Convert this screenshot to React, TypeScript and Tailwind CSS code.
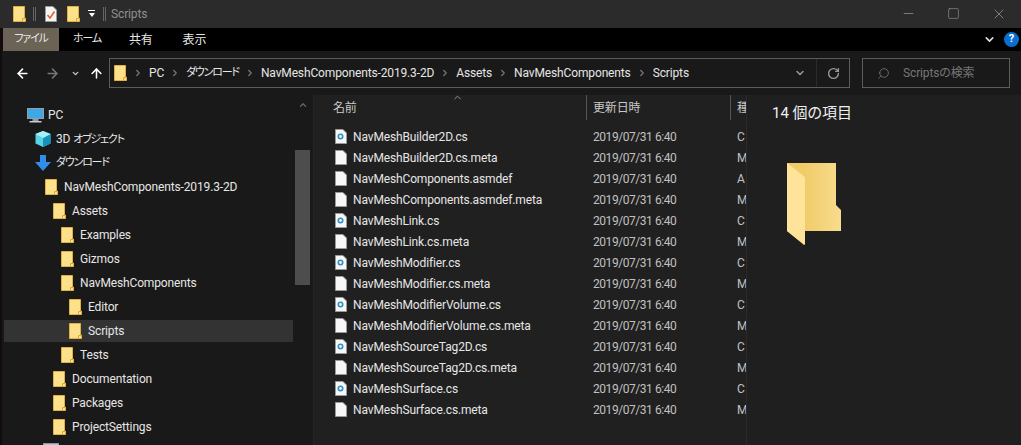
import { ArrowLeft, ArrowRight, ArrowUp, ChevronDown, ChevronRight, ChevronUp, Minus, RotateCw, Search, Square, X } from 'lucide-react';

const files = [
  ['NavMeshBuilder2D.cs', 'C', true],
  ['NavMeshBuilder2D.cs.meta', 'M', false],
  ['NavMeshComponents.asmdef', 'A', false],
  ['NavMeshComponents.asmdef.meta', 'M', false],
  ['NavMeshLink.cs', 'C', true],
  ['NavMeshLink.cs.meta', 'M', false],
  ['NavMeshModifier.cs', 'C', true],
  ['NavMeshModifier.cs.meta', 'M', false],
  ['NavMeshModifierVolume.cs', 'C', true],
  ['NavMeshModifierVolume.cs.meta', 'M', false],
  ['NavMeshSourceTag2D.cs', 'C', true],
  ['NavMeshSourceTag2D.cs.meta', 'M', false],
  ['NavMeshSurface.cs', 'C', true],
  ['NavMeshSurface.cs.meta', 'M', false],
] as const;

const tree = [
  { name: 'NavMeshComponents-2019.3-2D', pad: 'pl-[41px]' },
  { name: 'Assets', pad: 'pl-[49px]' },
  { name: 'Examples', pad: 'pl-[57px]' },
  { name: 'Gizmos', pad: 'pl-[57px]' },
  { name: 'NavMeshComponents', pad: 'pl-[57px]' },
  { name: 'Editor', pad: 'pl-[65px]' },
  { name: 'Scripts', pad: 'pl-[65px]', selected: true },
  { name: 'Tests', pad: 'pl-[57px]' },
  { name: 'Documentation', pad: 'pl-[49px]' },
  { name: 'Packages', pad: 'pl-[49px]' },
  { name: 'ProjectSettings', pad: 'pl-[49px]' },
];

// Yu Gothic's katakana run narrower than Noto's
const kana = 'whitespace-nowrap text-[11px] tracking-[-1.2px]';

function Folder() {
  return (
    <svg width="13" height="16" viewBox="0 0 13 16" className="shrink-0">
      <path d="M0.5 0.5H11.5V12H12.5V15.5H0.5Z" fill="#fde08a" stroke="#e0b040" />
      <path d="M9.5 15V12.5H12" fill="none" stroke="#d8a838" />
    </svg>
  );
}

function FileIcon({ cs }: { cs: boolean }) {
  return (
    <svg width="12" height="15" viewBox="0 0 12 15" className="shrink-0">
      <path d="M0.5 0.5H8L11.5 4V14.5H0.5Z" fill="#f7f7f7" stroke="#9a9a9a" />
      {cs && <circle cx="5.5" cy="7.5" r="2.2" fill="none" stroke="#2f8fc8" strokeWidth="1.6" />}
    </svg>
  );
}

function Crumb({ children, jp }: { children: string; jp?: boolean }) {
  return (
    <>
      <ChevronRight size={10} strokeWidth={3} className="mx-[6px] shrink-0 text-[#777]" />
      <span className={jp ? kana : 'whitespace-nowrap'}>{children}</span>
    </>
  );
}

export default function App() {
  return (
    <div
      className="flex h-[445px] w-[1021px] flex-col overflow-hidden bg-[#191919] text-[12px] tracking-[-0.14px] text-[#e6e6e6] [font-feature-settings:'palt']"
      style={{ fontFamily: 'Roboto, "Noto Sans CJK JP", sans-serif' }}
    >
      {/* title bar */}
      <div className="flex h-[28px] shrink-0 items-center bg-[#2b2b2b] pb-px pl-[13px]">
        <Folder />
        <div className="ml-[7px] h-[14px] w-[3px] border-x border-[#666]" />
        <svg width="12" height="16" viewBox="0 0 12 16" className="ml-[9px]">
          <path d="M0.5 0.5H8L11.5 4V15.5H0.5Z" fill="#f5f5f5" stroke="#999" />
          <path d="M2.5 9L5 12L9.5 5.5" fill="none" stroke="#e0602a" strokeWidth="1.5" />
        </svg>
        <div className="ml-[10px]">
          <Folder />
        </div>
        <div className="ml-[8px] flex flex-col items-center gap-[2px]">
          <div className="h-px w-[7px] bg-white" />
          <div className="h-0 w-0 border-x-[3.5px] border-t-[4px] border-x-transparent border-t-white" />
        </div>
        <div className="ml-[8px] h-[14px] w-[3px] border-x border-[#666]" />
        <span className="ml-[5px] text-[#8f8f8f]">Scripts</span>
        <div className="ml-auto flex items-center pr-[14px]">
          <Minus size={15} strokeWidth={1} className="text-[#aaa]" />
          <Square size={13} strokeWidth={1} className="ml-[31px] text-[#aaa]" />
          <X size={16} strokeWidth={1} className="ml-[31px] text-[#aaa]" />
        </div>
      </div>

      {/* ribbon tabs */}
      <div className="flex h-[23px] shrink-0 items-center border-l-[3px] border-[#120c0c] bg-black">
        <div className="flex h-full w-[56px] items-center justify-center bg-[#6b6355]">
          <span className={kana}>ファイル</span>
        </div>
        <span className={`ml-[14px] ${kana}`}>ホーム</span>
        <span className="ml-[28px]">共有</span>
        <span className="ml-[30px]">表示</span>
        <ChevronDown size={13} strokeWidth={3} className="ml-auto text-[#ddd]" />
        <div className="mr-[2px] ml-[8px] flex h-[15px] w-[15px] items-center justify-center rounded-full bg-[#0a6fd0] text-[11px] font-bold text-white">
          ?
        </div>
      </div>

      {/* address row */}
      <div className="flex h-[44px] shrink-0 items-center border-l-2 border-[#120c0c]">
        <ArrowLeft size={15} strokeWidth={2.5} className="ml-[13px] text-white" />
        <ArrowRight size={15} strokeWidth={2.5} className="ml-[15px] text-[#777]" />
        <ChevronDown size={9} strokeWidth={3.5} className="ml-[11px] text-[#ccc]" />
        <ArrowUp size={15} strokeWidth={2.5} className="ml-[9px] text-white" />
        <div className="ml-[5px] flex h-[30px] w-[741px] items-center border border-[#5c5c5c] pl-[4px]">
          <Folder />
          <Crumb>PC</Crumb>
          <Crumb jp>ダウンロード</Crumb>
          <Crumb>NavMeshComponents-2019.3-2D</Crumb>
          <Crumb>Assets</Crumb>
          <Crumb>NavMeshComponents</Crumb>
          <Crumb>Scripts</Crumb>
          <ChevronDown size={12} strokeWidth={3} className="ml-auto text-[#999]" />
          <div className="ml-[10px] flex h-full w-[33px] items-center justify-center border-l border-[#2a2a2a]">
            <RotateCw size={13} strokeWidth={2.5} className="text-[#999]" />
          </div>
        </div>
        <div className="ml-[12px] flex h-[30px] w-[148px] items-center border border-[#5c5c5c] pl-[14px] text-[#777]">
          <Search size={13} strokeWidth={1.5} className="-scale-x-100" />
          <span className="ml-[13px]">Scriptsの検索</span>
        </div>
      </div>

      <div className="flex min-h-0 flex-1">
        {/* nav pane */}
        <div className="flex w-[313px] shrink-0 overflow-hidden border-l-2 border-[#120c0c]">
          <div className="w-[293px] shrink-0 pt-[8px] pl-[2px]">
            <div className="flex h-[24px] items-center pl-[23px]">
              <svg width="17" height="15" viewBox="0 0 17 15">
                <rect x="0.5" y="0.5" width="16" height="10" fill="#3fa7e6" stroke="#8fa0ad" />
                <rect x="5.5" y="11" width="6" height="2" fill="#8a9aa6" />
                <rect x="2.5" y="13" width="12" height="1.5" fill="#c4ced6" />
              </svg>
              <span className="ml-[4px]">PC</span>
            </div>
            <div className="flex h-[24px] items-center pl-[31px]">
              <svg width="16" height="16" viewBox="0 0 16 16">
                <path d="M8 0L15.5 3V12.5L8 16L0.5 12.5V3Z" fill="#58d2e6" />
                <path d="M8 7L15.5 3V12.5L8 16Z" fill="#1593b8" />
                <path d="M8 0L15.5 3L8 7L0.5 3Z" fill="#a8eef8" />
              </svg>
              <span className="ml-[5px] whitespace-nowrap">
                3D <span className={kana}>オブジェクト</span>
              </span>
            </div>
            <div className="flex h-[24px] items-center pl-[31px]">
              <svg width="16" height="16" viewBox="0 0 16 16">
                <path d="M5 0H11V7H16L8 16L0 7H5Z" fill="#2f8fe8" />
              </svg>
              <span className={`ml-[5px] ${kana}`}>ダウンロード</span>
            </div>
            {tree.map((t) => (
              <div key={t.name} className="flex h-[24px] items-center">
                <div className={`flex h-[22px] w-[289px] items-center ${t.pad} ${t.selected ? 'bg-[#333333]' : ''}`}>
                  <Folder />
                  <span className="ml-[6px] whitespace-nowrap">{t.name}</span>
                </div>
              </div>
            ))}
            <div className="flex h-[24px] items-start pt-[4px] pl-[39px]">
              <svg width="16" height="16" viewBox="0 0 16 16">
                <rect x="0.5" y="0.5" width="15" height="12" fill="#b8c6d2" stroke="#8a98a4" />
              </svg>
            </div>
          </div>
          {/* scrollbar */}
          <div className="flex w-[15px] shrink-0 flex-col items-center pt-[5px]">
            <ChevronUp size={10} strokeWidth={3} className="text-[#666]" />
            <div className="mt-[40px] h-[135px] w-full bg-[#4d4d4d]" />
          </div>
        </div>

        {/* file list */}
        <div className="relative flex w-[433px] shrink-0 flex-col overflow-hidden border-l border-[#252525] bg-[#202020]">
          <ChevronUp size={11} strokeWidth={2} className="absolute top-[-3px] left-[138px] text-[#999]" />
          <div className="flex h-[25px] shrink-0 items-center whitespace-nowrap text-[#c8c8c8]">
            <span className="w-[272px] shrink-0 pl-[19px]">名前</span>
            <div className="h-full w-[7px] shrink-0 border-l border-[#555]" />
            <span className="w-[137px] shrink-0">更新日時</span>
            <div className="h-full w-[7px] shrink-0 border-l border-[#555]" />
            <span className="shrink-0">種</span>
          </div>
          <div className="pt-[6px]">
            {files.map(([name, type, cs]) => (
              <div key={name} className="flex h-[21px] items-center whitespace-nowrap">
                <div className="flex w-[279px] shrink-0 items-center pl-[21px]">
                  <FileIcon cs={cs} />
                  <span className="ml-[6px]">{name}</span>
                </div>
                <span className="w-[144px] shrink-0 tracking-[-0.45px] text-[#c0c0c0]">2019/07/31 6:40</span>
                <span className="shrink-0 text-[#c0c0c0]">{type}</span>
              </div>
            ))}
          </div>
        </div>

        {/* details pane */}
        <div className="flex-1 border-l border-[#2a2a2a] bg-[#1f1f1f] pt-[8px] pl-[25px]">
          <div className="text-[15px] leading-[20px] tracking-normal text-[#f0f0f0]">14 個の項目</div>
          <svg width="54" height="82" viewBox="0 0 54 82" className="mt-[40px] ml-[15px]">
            <defs>
              <linearGradient id="folderBack" x1="0" y1="0" x2="1" y2="0">
                <stop offset="0.3" stopColor="#f0cb68" />
                <stop offset="1" stopColor="#f8dc8e" />
              </linearGradient>
            </defs>
            <path d="M0 0H49V42L54 47V68H17V82L0 68Z" fill="url(#folderBack)" />
            <path d="M0 0L18 14V82L0 68Z" fill="#fde49a" />
          </svg>
        </div>
      </div>
    </div>
  );
}
